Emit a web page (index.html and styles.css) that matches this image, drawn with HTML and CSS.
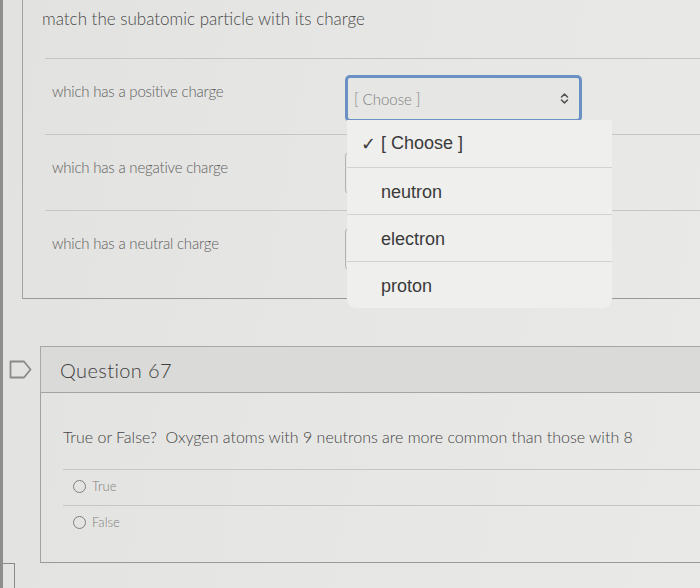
FILE: index.html
```html
<!DOCTYPE html>
<html>
<head>
<meta charset="utf-8">
<link rel="stylesheet" href="styles.css">
</head>
<body>
<div class="page">
  <section class="q1">
    <h2 class="prompt">match the subatomic particle with its charge</h2>
    <div class="rows">
      <div class="row">
        <span class="label">which has a positive charge</span>
        <div class="select focused">
          <span class="placeholder">[ Choose ]</span>
          <svg class="chev" width="9" height="11" viewBox="0 0 9 11"><path d="M1.5 4 L4.5 1.2 L7.5 4 M1.5 7 L4.5 9.8 L7.5 7" fill="none" stroke="#555" stroke-width="1.6" stroke-linecap="round" stroke-linejoin="round"/></svg>
          <ul class="menu">
            <li class="opt selected"><span class="check">✓</span>[ Choose ]</li>
            <li class="opt">neutron</li>
            <li class="opt">electron</li>
            <li class="opt">proton</li>
          </ul>
        </div>
      </div>
      <div class="row">
        <span class="label">which has a negative charge</span>
        <div class="select"></div>
      </div>
      <div class="row">
        <span class="label">which has a neutral charge</span>
        <div class="select"></div>
      </div>
    </div>
  </section>

  <section class="q67">
    <div class="flag">
      <svg width="24" height="19" viewBox="0 0 24 19"><path d="M1.5 1.5 H15 L21.5 9.5 L15 17.5 H1.5 Z" fill="none" stroke="#8a8a88" stroke-width="1.8" stroke-linejoin="round"/></svg>
    </div>
    <div class="qbox">
      <header class="qhead">Question 67</header>
      <div class="qbody">
        <p class="qtext">True or False?&nbsp; Oxygen atoms with 9 neutrons are more common than those with 8</p>
        <div class="answers">
          <label class="answer"><span class="radio"></span>True</label>
          <label class="answer"><span class="radio"></span>False</label>
        </div>
      </div>
    </div>
  </section>
  <div class="corner"></div>
</div>
</body>
</html>
```

FILE: styles.css
```css
html, body {
  margin: 0;
  padding: 0;
}
body {
  background: #e4e4e2;
  font-family: Lato, "Liberation Sans", sans-serif;
  width: 700px;
  height: 588px;
  overflow: hidden;
}
.page {
  height: 588px;
  border-left: 3px solid #8e8e8c;
  display: flex;
  flex-direction: column;
  background: linear-gradient(100deg, #e2e2e0 0%, #e6e6e4 45%, #e9e9e7 100%);
}

/* Question 1 */
.q1 {
  margin-left: 19px;
  height: 299px;
  border-left: 1px solid #a2a2a0;
  border-bottom: 1px solid #9a9a98;
  padding-left: 19px;
  display: flex;
  flex-direction: column;
}
.prompt {
  margin: 0;
  padding-top: 8px;
  height: 50px;
  font-size: 17px;
  line-height: 22px;
  font-weight: 300;
  color: #4a4a4a;
  letter-spacing: 0;
}
.rows {
  margin-left: 3px;
  border-top: 1px solid #c4c4c2;
  display: flex;
  flex-direction: column;
}
.row {
  height: 75px;
  display: grid;
  grid-template-columns: 293px 237px;
  padding-left: 7px;
  border-bottom: 1px solid #c6c6c4;
}
.row:last-child {
  border-bottom: none;
}
.label {
  padding-top: 23px;
  font-size: 15px;
  line-height: 18px;
  font-weight: 300;
  color: #606060;
  letter-spacing: -0.2px;
}
.select {
  position: relative;
  margin-top: 17px;
  height: 42px;
  border: 1px solid #b4b4b2;
  border-radius: 4px;
  box-sizing: border-box;
}
.select.focused {
  margin-top: 16px;
  height: 47px;
  border: 3px solid #6a90c4;
  border-radius: 5px;
  display: flex;
  align-items: center;
  justify-content: space-between;
  padding: 0 10px 0 6px;
  background: #e6e6e4;
}
.placeholder {
  font-size: 15px;
  font-weight: 300;
  color: #7e7e7e;
}
.chev {
  display: block;
}

/* Dropdown menu (overlay) */
.menu {
  position: absolute;
  top: 100%;
  left: -1px;
  width: 265px;
  margin: 1px 0 0 0;
  padding: 0;
  list-style: none;
  background: #efefed;
  border-radius: 0 0 9px 9px;
  z-index: 5;
}
.opt {
  position: relative;
  height: 47px;
  box-sizing: border-box;
  padding-left: 34px;
  padding-top: 2px;
  display: flex;
  align-items: center;
  font-family: "Liberation Sans", Arial, sans-serif;
  font-size: 18px;
  color: #3a3a3a;
  border-bottom: 1px solid #d2d2d0;
}
.opt.selected {
  height: 48px;
  padding-top: 0;
}
.opt:last-child {
  border-bottom: none;
  height: 46px;
}
.check {
  position: absolute;
  left: 14px;
  font-size: 18px;
}

/* Question 67 */
.q67 {
  margin-top: 47px;
  display: flex;
}
.flag {
  width: 37px;
  padding-top: 14px;
  padding-left: 6px;
  box-sizing: border-box;
}
.qbox {
  flex: 1;
  display: flex;
  flex-direction: column;
}
.qhead {
  height: 45px;
  background: #dadad8;
  border-top: 1px solid #a8a8a6;
  border-left: 1px solid #a8a8a6;
  border-bottom: 1px solid #a4a4a2;
  padding-left: 19px;
  display: flex;
  align-items: center;
  font-size: 20px;
  font-weight: 300;
  color: #3e3e3e;
  letter-spacing: 0.4px;
}
.qbody {
  height: 169px;
  border-left: 1px solid #a2a2a0;
  border-bottom: 1px solid #9a9a98;
  padding-left: 22px;
  display: flex;
  flex-direction: column;
}
.qtext {
  margin: 0;
  padding-top: 35px;
  height: 41px;
  font-size: 16px;
  line-height: 18px;
  font-weight: 300;
  color: #454545;
  letter-spacing: 0;
  border-bottom: 1px solid #c6c6c4;
}
.answers {
  display: flex;
  flex-direction: column;
}
.answer {
  height: 36px;
  display: flex;
  align-items: flex-start;
  padding-top: 8px;
  box-sizing: border-box;
  padding-left: 10px;
  gap: 6px;
  font-size: 13px;
  line-height: 16px;
  font-weight: 300;
  color: #808080;
  border-bottom: 1px solid #c6c6c4;
}
.answer:last-child {
  border-bottom: none;
}
.radio {
  margin-top: 2px;
  width: 11px;
  height: 11px;
  border: 1.5px solid #808080;
  border-radius: 50%;
}
.corner {
  margin-top: auto;
  width: 11px;
  height: 24px;
  border-top: 1px solid #8a8a88;
  border-right: 1px solid #8a8a88;
}
```
